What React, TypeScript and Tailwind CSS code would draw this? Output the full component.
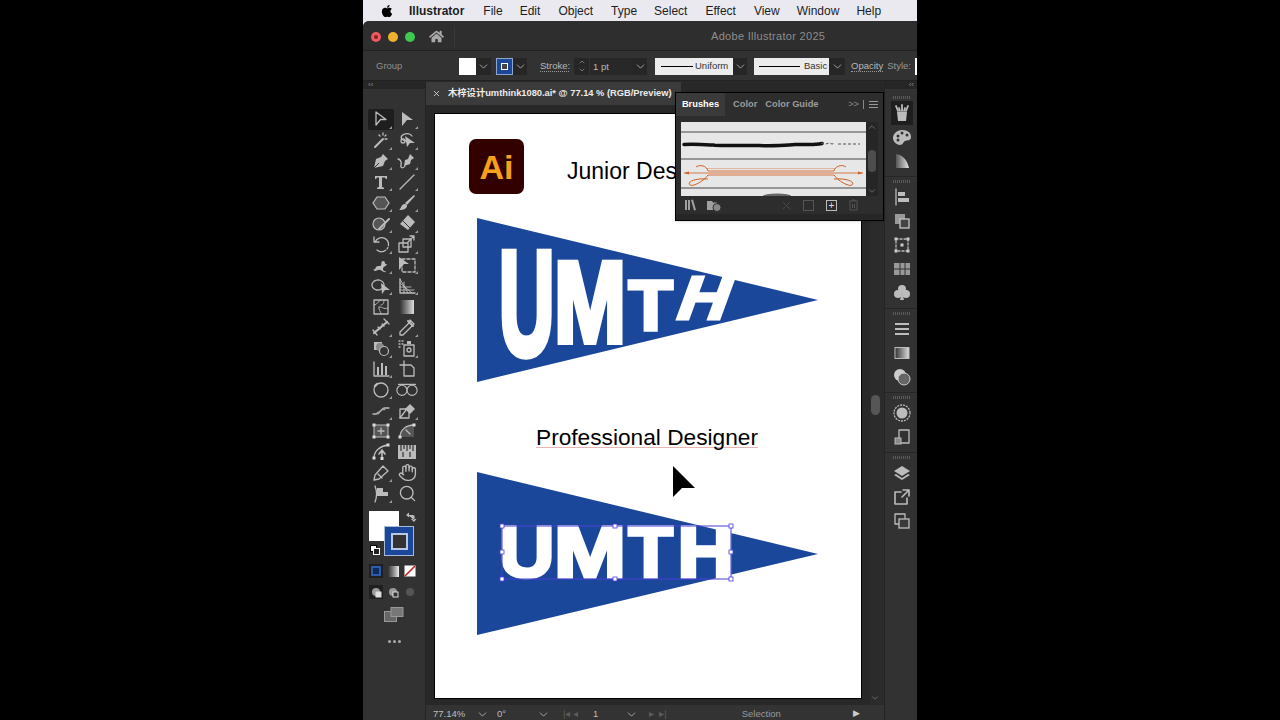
import type { ReactNode } from "react";
import { FaApple, FaHome } from "react-icons/fa";
import { ChevronDown, ChevronUp, Hand, Search, X } from "lucide-react";

const ui = "font-['Liberation_Sans',sans-serif]";

/* ---------- tool icons, all 20x20 ---------- */
const line = { fill: "none", stroke: "currentColor", strokeWidth: 1.3, strokeLinecap: "round", strokeLinejoin: "round" } as const;
const I = ({ children, s = 20 }: { children: ReactNode; s?: number }) => (
  <svg width={s} height={s} viewBox="0 0 20 20" className="text-[#bcbcbc]">{children}</svg>
);

type Tool = { icon: ReactNode; corner?: boolean; active?: boolean };

const tools: Tool[] = [
  { active: true, corner: true, icon: <I><path d="M5 3l10 7.5h-5.5L5 16z" {...line} /></I> },
  { corner: true, icon: <I><path d="M5 3l11 8h-6l-5 6z" fill="currentColor" /></I> },
  { corner: true, icon: <I><path d="M4 17L12 9" {...line} strokeWidth={2} /><path d="M12 3v2M15 5l-1 1M16 9h-2M8 5l1 1" {...line} /></I> },
  { corner: true, icon: <I><path d="M10 11C5 11 3 8 5 5.5 8 3 13 3 15 6" {...line} /><circle cx="6" cy="11" r="2" {...line} /><path d="M8 6l10 7h-5l-3 4z" fill="currentColor" /></I> },
  { corner: true, icon: <I><path d="M12 3l5 5-3 2-2 5-9 2 2-9 5-2z" fill="currentColor" /><path d="M3 17l5-5" stroke="#333" /></I> },
  { corner: true, icon: <I><path d="M13 3l4 4-3 2-1 4-6 2 1-6 3-1z" fill="currentColor" /><path d="M8 15c-2 3-5 2-4-1s-1-6-3-6" {...line} /></I> },
  { corner: true, icon: <I><path d="M4 4h12v3h-1l-1-1.500h-3V15l2 .8V17H6v-1.200l2-.8V5.500H6L5 7H4z" fill="currentColor" /></I> },
  { corner: true, icon: <I><path d="M3 17L17 3" {...line} /></I> },
  { corner: true, icon: <I><path d="M6 4h8l4 6-4 6H6l-4-6z" fill="#555" stroke="currentColor" strokeWidth={1.2} /></I> },
  { corner: true, icon: <I><path d="M17 2l1 1-8 9-2-2z" fill="currentColor" /><path d="M7 11c3 0 4 2 2 4s-5 2-7 2c2-1 2-5 5-6z" fill="currentColor" /></I> },
  { corner: true, icon: <I><circle cx="8" cy="11" r="6" fill="#555" stroke="currentColor" strokeWidth={1.2} /><path d="M8 16l10-10" {...line} strokeWidth={2} /></I> },
  { corner: true, icon: <I><path d="M11 2l7 7-7 8-8-6z" fill="currentColor" /><path d="M6 8l7 7" stroke="#333" /></I> },
  { corner: true, icon: <I><path d="M4 8a7 7 0 1 1 2 8" {...line} strokeDasharray="20 2 1.500 2" /><path d="M3 3v5h5" {...line} /></I> },
  { corner: true, icon: <I><rect x="2" y="9" width="9" height="9" {...line} /><rect x="6" y="5" width="8" height="8" {...line} /><path d="M11 8l6-6M13 2h4v4" {...line} /></I> },
  { corner: true, icon: <I><path d="M2 14c3 2 2-4 6-3s1-5 4-5 1 4 4 3c-1 3-4 2-4 5s4 2 3 3c-3 1-5-3-8-2s-3 2-5-1z" fill="currentColor" /></I> },
  { corner: true, icon: <I><rect x="5" y="4" width="13" height="13" {...line} strokeDasharray="3 2" /><path d="M2 2l10 7H7l-5 6z" fill="currentColor" /></I> },
  { corner: true, icon: <I><ellipse cx="7" cy="9" rx="6" ry="5" {...line} strokeDasharray="3 1" /><path d="M10 7l9 7h-5l-3 4z" fill="currentColor" /></I> },
  { corner: true, icon: <I><path d="M3 3v14h15" {...line} /><path d="M3 7l12 10M3 3l8 14M3 11h11M3 14h14M7 6v11" {...line} strokeWidth={0.9} /></I> },
  { icon: <I><rect x="3" y="3" width="14" height="14" {...line} /><path d="M3 8c4 0 4-5 7-5M8 10c3-1 4 3 9 1M10 17c0-3-3-4-2-7M10 8c3 0 3-4 3-5" {...line} strokeWidth={0.9} /></I> },
  { icon: <svg width="20" height="20" viewBox="0 0 20 20"><defs><linearGradient id="gt" x1="0" x2="1"><stop offset="0" stopColor="#333" /><stop offset="1" stopColor="#ddd" /></linearGradient></defs><rect x="3" y="3" width="14" height="14" fill="url(#gt)" /></svg> },
  { corner: true, icon: <I><path d="M3 16L16 5" {...line} strokeWidth={2.2} /><path d="M2 13l4 5M13 2l5 5M7 10l2 2M11 7l2 2" {...line} /></I> },
  { corner: true, icon: <I><path d="M13 3l4 4-2 2-9 9H3v-3l9-9z" {...line} /><path d="M11 4l5 5" {...line} strokeWidth={2} /></I> },
  { corner: true, icon: <I><rect x="3" y="4" width="8" height="8" fill="currentColor" /><circle cx="9" cy="9" r="4" fill="#888" /><circle cx="13" cy="13" r="4.500" fill="#333" stroke="currentColor" strokeWidth={1.2} /></I> },
  { corner: true, icon: <I><rect x="7" y="7" width="10" height="11" {...line} /><rect x="10" y="3" width="4" height="3" fill="currentColor" /><circle cx="12" cy="12" r="2" {...line} /><path d="M2 3h1M5 3h1M2 6h1M5 6h1M2 9h1" {...line} /></I> },
  { corner: true, icon: <I><path d="M3 3v14h15" {...line} /><path d="M6 16V8h2v8zM10 16V4h2v12zM14 16V7h2v9z" fill="currentColor" /></I> },
  { icon: <I><path d="M3 6h4V2M7 6h7l3 3v8H7z" {...line} /></I> },
  { corner: true, icon: <I><circle cx="10" cy="10" r="7" {...line} /><path d="M4 6l2-2" {...line} strokeWidth={2.4} /></I> },
  { icon: <svg width="22" height="17" viewBox="0 0 26 20" className="text-[#bcbcbc]"><circle cx="7" cy="11" r="6" {...line} /><circle cx="19" cy="11" r="6" {...line} /><path d="M3 4h20" {...line} strokeWidth={1.6} /></svg> },
  { corner: true, icon: <I><path d="M2 13h3c4 0 5-6 9-6h4" {...line} /><circle cx="7" cy="12" r="1" fill="#333" stroke="currentColor" /><circle cx="13" cy="8" r="1" fill="#333" stroke="currentColor" /></I> },
  { corner: true, icon: <I><rect x="3" y="8" width="9" height="9" {...line} /><path d="M13 3l5 5-5 5-5-5z" fill="currentColor" /><path d="M3 17L9 9" {...line} /></I> },
  { icon: <I><rect x="3" y="4" width="14" height="12" fill="#555" stroke="currentColor" /><path d="M10 7v6M7 10h6" {...line} /><rect x="1.500" y="2.500" width="3" height="3" fill="#ddd" /><rect x="15.500" y="2.500" width="3" height="3" fill="#ddd" /><rect x="1.500" y="14.500" width="3" height="3" fill="#ddd" /><rect x="15.500" y="14.500" width="3" height="3" fill="#ddd" /></I> },
  { icon: <I><path d="M3 16C3 9 9 4 17 4v12z" fill="#555" /><path d="M3 16C3 9 9 4 17 4" {...line} /><path d="M9 9l4 4" {...line} /><rect x="1.500" y="14.500" width="3" height="3" fill="#ddd" /><rect x="15.500" y="2.500" width="3" height="3" fill="#ddd" /></I> },
  { icon: <I><path d="M3 16C3 9 9 4 17 3" {...line} /><path d="M11 16V8M8 12l3-4 3 4" {...line} strokeWidth={1.6} /><rect x="1.500" y="14.500" width="3" height="3" fill="#ddd" /><rect x="15.500" y="1.500" width="3" height="3" fill="#ddd" /><rect x="9.500" y="15" width="3" height="3" fill="#ddd" /></I> },
  { icon: <svg width="20" height="20" viewBox="0 0 20 20"><rect x="1" y="3" width="18" height="14" fill="#bbb" /><path d="M4 3v6M7 3v4M10 3v6M13 3v4M16 3v6M6 10v5M13 10v5" stroke="#333" strokeWidth={1.2} /></svg> },
  { corner: true, icon: <I><path d="M3 17l1-5 8-9 5 5-9 8z" {...line} /><path d="M7 11l4 4" {...line} /></I> },
  { icon: <Hand size={19} strokeWidth={1.7} className="text-[#bcbcbc]" /> },
  { corner: true, icon: <I><path d="M4 2c2 5 2 11 0 16" {...line} /><path d="M6 4h6v4h5v4H6z" fill="currentColor" /></I> },
  { icon: <Search size={19} strokeWidth={1.7} className="text-[#bcbcbc]" /> },
];

/* ---------- right dock ---------- */
const dockGroups: ReactNode[][] = [
  [
    <I key="b"><path d="M6 8L4 3M10 8V2M14 8l2-5M8 8l-1-3M12 8l1-3" {...line} strokeWidth={1.8} /><path d="M5 9h10l-1 9H6z" fill="currentColor" /></I>,
    <I key="p"><path d="M10 3c6 0 9 3 9 7s-4 3-6 4-2 4-5 4-7-3-7-7 4-8 9-8z" fill="currentColor" /><circle cx="6" cy="13" r="1.500" fill="#333" /><circle cx="6" cy="9" r="1.500" fill="#333" /><circle cx="10" cy="6" r="1.500" fill="#333" /><circle cx="15" cy="8" r="1.500" fill="#333" /></I>,
    <svg key="g" width="20" height="20" viewBox="0 0 20 20"><defs><linearGradient id="gd" x1="0" x2="1"><stop offset="0" stopColor="#555" /><stop offset="1" stopColor="#e5e5e5" /></linearGradient></defs><path d="M4 3c7 1 11 6 13 14H4z" fill="url(#gd)" /></svg>,
  ],
  [
    <I key="a"><path d="M4 2v16" {...line} /><path d="M6 5h7v4H6zM6 11h11v4H6z" fill="currentColor" /></I>,
    <I key="t"><rect x="3" y="3" width="10" height="10" fill="#999" /><rect x="8" y="8" width="9" height="9" fill="#444" stroke="currentColor" strokeWidth={1.4} /></I>,
    <I key="x"><rect x="4" y="4" width="12" height="12" {...line} strokeDasharray="2 2" /><rect x="2.500" y="2.500" width="3" height="3" fill="#ccc" /><rect x="14.500" y="2.500" width="3" height="3" fill="#ccc" /><rect x="2.500" y="14.500" width="3" height="3" fill="#ccc" /><rect x="14.500" y="14.500" width="3" height="3" fill="#ccc" /><rect x="8.500" y="8.500" width="3" height="3" fill="#ccc" /></I>,
    <I key="k"><rect x="2" y="4" width="16" height="12" fill="#999" /><path d="M2 10h16M8 4v12M13 4v12" stroke="#333" /></I>,
    <I key="c"><circle cx="10" cy="6" r="4" fill="currentColor" /><circle cx="6" cy="11" r="4" fill="currentColor" /><circle cx="14" cy="11" r="4" fill="currentColor" /><path d="M10 10l2 7H8z" fill="currentColor" /></I>,
  ],
  [
    <I key="s"><path d="M3 5h14M3 10h14M3 15h14" stroke="currentColor" strokeWidth={2} /></I>,
    <svg key="gr" width="20" height="20" viewBox="0 0 20 20"><defs><linearGradient id="gs" x1="0" x2="1"><stop offset="0" stopColor="#333" /><stop offset="1" stopColor="#ddd" /></linearGradient></defs><rect x="3" y="4.500" width="14" height="11" fill="url(#gs)" stroke="#bbb" /></svg>,
    <I key="o"><circle cx="8" cy="8" r="6" fill="#ccc" /><circle cx="12" cy="12" r="6" fill="#666" stroke="#ccc" /></I>,
  ],
  [
    <I key="ap"><circle cx="10" cy="10" r="5.500" fill="currentColor" /><circle cx="10" cy="10" r="8" {...line} strokeDasharray="1 2" /></I>,
    <I key="tr"><rect x="7" y="3" width="10" height="13" {...line} /><rect x="3" y="11" width="6" height="6" fill="#888" stroke="currentColor" /></I>,
  ],
  [
    <I key="l"><path d="M10 3l8 5-8 5-8-5z" fill="currentColor" /><path d="M2 12l8 5 8-5-2-1-6 4-6-4z" fill="currentColor" /></I>,
    <I key="e"><path d="M9 5H3v12h12v-6M11 3h6v6M17 3l-7 7" {...line} strokeWidth={1.6} /></I>,
    <I key="ab"><rect x="3" y="3" width="10" height="10" {...line} /><rect x="7" y="8" width="10" height="9" fill="#3a3a3a" stroke="currentColor" strokeWidth={1.3} /></I>,
  ],
];

const Grip = () => <div className="h-[3px] w-[17px] mx-auto bg-[repeating-linear-gradient(90deg,#5a5a5a_0_1px,transparent_1px_2px)]" />;

const Chev = ({ className = "" }: { className?: string }) => (
  <ChevronDown size={13} strokeWidth={1.6} className={`text-[#b5b5b5] ${className}`} />
);

/* ---------- artboard logo text: real glyphs stretched by hand, stroke fattens them ---------- */
const Glyph = ({ ch, x, y, sx, sy, skew = 0 }: { ch: string; x: number; y: number; sx: number; sy: number; skew?: number }) => (
  <text
    transform={`translate(${x} ${y}) skewX(${skew}) scale(${sx} ${sy})`}
    fontFamily="'Liberation Sans', sans-serif"
    fontWeight={700}
    fontSize={100}
    fill="#fff"
    stroke="#fff"
    strokeWidth={5}
    strokeLinejoin="miter"
  >
    {ch}
  </text>
);

const handles = [[502, 526], [615, 526], [731, 526], [502, 552], [731, 552], [502, 579], [615, 579], [731, 579]];

function Artwork() {
  // coordinates are page pixels, the viewBox starts at the artboard's corner
  return (
    <svg width="428" height="586" viewBox="434 113 428 586" className="absolute left-[-1px] top-[-1px]">
      <path d="M477 218L818 300 477 382z" fill="#1b479b" />
      <Glyph ch="U" x={498.9} y={354.5} sx={0.766} sy={1.48} />
      <Glyph ch="M" x={554} y={342} sx={0.865} sy={1.152} />
      <Glyph ch="T" x={628.4} y={330.2} sx={0.726} sy={0.705} />
      <Glyph ch="H" x={672.9} y={318.5} sx={0.7} sy={0.61} skew={-20} />

      <path d="M477 472L818 554 477 635z" fill="#1b479b" />
      <Glyph ch="U" x={498.9} y={577} sx={0.766} sy={0.718} />
      <Glyph ch="M" x={554} y={577.2} sx={0.865} sy={0.718} />
      <Glyph ch="T" x={628.4} y={577.2} sx={0.726} sy={0.718} />
      <Glyph ch="H" x={677.4} y={577.2} sx={0.79} sy={0.718} />
      <rect x="502" y="526" width="229" height="53" fill="none" stroke="#4a3fd6" />
      {handles.map(([x, y]) => (
        <rect key={`${x}-${y}`} x={x - 2} y={y - 2} width="4" height="4" fill="#fff" stroke="#4a3fd6" strokeWidth={0.8} />
      ))}
      <path d="M673 466L695 488 682 488 673 497z" fill="#000" />
    </svg>
  );
}

function BrushesPanel() {
  return (
    <div className="absolute left-[249px] top-[11px] w-[209px] h-[129px] bg-[#2d2d2d] border border-black shadow flex flex-col">
      <div className={`h-[23px] flex items-center text-[9.3px] font-bold text-[#9c9c9c] ${ui}`}>
        <div className="h-full w-[49px] bg-[#3a3a3a] text-white flex items-center justify-center">Brushes</div>
        <span className="ml-[8px]">Color</span>
        <span className="ml-[8px]">Color Guide</span>
        <span className="ml-auto text-[#8a8a8a] font-normal">&gt;&gt;</span>
        <div className="w-px h-[9px] bg-[#888] ml-[4px]" />
        <div className="ml-[5px] mr-[5px] w-[9px] h-[7px] border-y border-[#999] relative">
          <div className="absolute left-0 right-0 top-[2px] h-px bg-[#999]" />
        </div>
      </div>
      <div className="flex ml-[5px] mt-[6px] h-[74px] w-[197px]">
        <svg width="185" height="74" viewBox="0 0 185 74" className="bg-[#e7e7e7]">
          <path d="M0 10h185M0 37h185M0 66h185" stroke="#7c7c7c" strokeWidth={1.5} />
          <path d="M3 22.500c20-1 30 1.500 50 1s35 1 55-.5 20 .5 33-1.500" fill="none" stroke="#111" strokeWidth={3.5} strokeLinecap="round" strokeDasharray="30 .6 44 .6 36 .6 20 .8 9 1" />
          <path d="M140 21.500l3-.5 2 1 3-1 3 1 3-.8M157 22h22" stroke="#555" strokeWidth={1} strokeDasharray="3 2" fill="none" />
          <path d="M3 51h179" stroke="#cf5f22" strokeWidth={0.8} />
          <path d="M3 51l5-1.500v3zM182 51l-5-1.500v3z" fill="#cf5f22" />
          <path d="M25 46.500h130" stroke="#d9a98c" strokeWidth={0.8} />
          <path d="M27 53h126M27 49h126" stroke="#d8672c" strokeWidth={0.9} />
          <path d="M27 53c-4 6-15 12-18 10s2-7 18-6M27 49c-1-5-8-7-12-4M153 53c4 6 15 12 18 10s-2-7-18-6M153 49c1-5 8-7 12-4" fill="none" stroke="#cf5f22" strokeWidth={1} />
          <ellipse cx="96" cy="74" rx="14" ry="2.500" fill="#666" />
        </svg>
        <div className="flex-1 bg-[#262626] flex flex-col items-center relative">
          <ChevronUp size={10} className="text-[#777]" />
          <div className="w-[8px] h-[22px] bg-[#4d4d4d] rounded-full mt-[18px]" />
          <ChevronDown size={10} className="text-[#777] mt-auto" />
        </div>
      </div>
      <div className="h-[18px] relative flex items-center text-[#a0a0a0]">
        <svg width="14" height="12" viewBox="0 0 14 12" className="ml-[8px]"><path d="M1 11V1h2v10zM4 11V1h2v10zM7 1l2-.500 3 10.500-2 .500z" fill="currentColor" /></svg>
        <svg width="16" height="13" viewBox="0 0 16 13" className="ml-[8px]"><path d="M1 2h5l1 1.500h4V11H1z" fill="currentColor" /><circle cx="11" cy="8.500" r="4" fill="#888" stroke="#2d2d2d" /></svg>
        <X size={13} strokeWidth={1.4} className="text-[#4f4f4f] ml-[58px]" />
        <div className="ml-[10px] w-[11px] h-[11px] border border-[#555]" />
        <div className="ml-[12px] w-[11px] h-[11px] border border-[#bbb] text-[#ddd] text-[10px] leading-[9px] text-center">+</div>
        <svg width="11" height="12" viewBox="0 0 11 12" className="ml-[11px]"><path d="M2 3v8h7V3M1 2h9M4 2V1h3v1M4.500 5v4M6.500 5v4" fill="none" stroke="#555" /></svg>
      </div>
      <div className="flex-1 bg-[#262626]" />
    </div>
  );
}

export default function App() {
  return (
    <div className={`w-[1280px] h-[720px] bg-black flex justify-center overflow-hidden ${ui}`}>
      <div className="w-[554px] h-full flex flex-col bg-[#e9e9ef]">
        {/* mac menu bar */}
        <div className="h-[21px] shrink-0 flex items-center text-[#1d1d1f] text-[12px] pl-[17px]">
          <FaApple size={14} className="text-black" />
          <span className="font-bold ml-[15px]">Illustrator</span>
          {[["File", 19], ["Edit", 17], ["Object", 18], ["Type", 18], ["Select", 17], ["Effect", 18], ["View", 18], ["Window", 17], ["Help", 17]].map(([m, g]) => (
            <span key={m} style={{ marginLeft: Number(g) }}>{m}</span>
          ))}
        </div>

        <div className="flex-1 min-h-0 flex flex-col rounded-tl-[6px] overflow-hidden bg-[#323232]">
          {/* title bar */}
          <div className="h-[30px] shrink-0 bg-[#2e2e2e] flex items-center pl-[8px] pt-[2px] border-b border-[#222]">
            <div className="w-[10px] h-[10px] rounded-full bg-[#ee5a5f] flex items-center justify-center"><div className="w-[4px] h-[4px] rounded-full bg-[#8e1c20]" /></div>
            <div className="w-[10px] h-[10px] rounded-full bg-[#f0b22e] ml-[7px]" />
            <div className="w-[10px] h-[10px] rounded-full bg-[#3fc94f] ml-[7px]" />
            <FaHome size={15} className="text-[#a8a8a8] ml-[14px]" />
            <div className="w-px h-[20px] bg-[#3a3a3a] ml-[10px]" />
            <span className="text-[11px] text-[#8d8d8d] ml-[256px] tracking-[0.3px]">Adobe Illustrator 2025</span>
          </div>

          {/* control bar */}
          <div className="h-[30px] shrink-0 bg-[#323232] flex items-center pt-[1px] text-[9.5px] text-[#b8b8b8] border-b border-[#222] whitespace-nowrap">
            <span className="ml-[13px] w-[83px] text-[#8f8f8f]">Group</span>
            <div className="w-[17px] h-[17px] bg-white" />
            <div className="w-[15px] h-[17px] bg-[#262626] flex items-center justify-center"><Chev /></div>
            <div className="ml-[5px] w-[17px] h-[17px] bg-[#1b479b] border border-[#8fa6cc] flex items-center justify-center">
              <div className="w-[7px] h-[7px] border border-white bg-[#444]" />
            </div>
            <div className="w-[14px] h-[17px] bg-[#262626] flex items-center justify-center"><Chev /></div>
            <span className="ml-[13px] w-[29px] border-b border-dotted border-[#999] leading-[11px]">Stroke:</span>
            <div className="ml-[5px] w-[15px] h-[17px] bg-[#262626] flex flex-col items-center justify-center">
              <ChevronUp size={8} strokeWidth={1.6} /><ChevronDown size={8} strokeWidth={1.6} />
            </div>
            <div className="w-[43px] h-[17px] bg-[#282828] ml-px pl-[3px] leading-[17px]">1 pt</div>
            <div className="w-[14px] h-[17px] bg-[#262626] flex items-center justify-center"><Chev /></div>
            <div className="ml-[8px] w-[78px] h-[17px] bg-[#ececec] text-[#333] flex items-center pl-[6px]">
              <div className="w-[32px] h-px bg-black" /><span className="ml-[2px]">Uniform</span>
            </div>
            <div className="w-[14px] h-[17px] bg-[#262626] flex items-center justify-center"><Chev /></div>
            <div className="ml-[7px] w-[75px] h-[17px] bg-[#ececec] text-[#333] flex items-center pl-[5px]">
              <div className="w-[41px] h-px bg-black" /><span className="ml-[4px]">Basic</span>
            </div>
            <div className="w-[16px] h-[17px] bg-[#262626] flex items-center justify-center"><Chev /></div>
            <span className="ml-[6px] border-b border-dotted border-[#999] leading-[11px]">Opacity</span>
            <span className="ml-[4px] text-[#989898]">Style:</span>
            <div className="ml-auto w-[2px] h-[17px] bg-white" />
          </div>

          <div className="flex-1 min-h-0 flex">
            {/* tools */}
            <div className="w-[63px] shrink-0 bg-[#323232] border-r border-[#242424] flex flex-col">
              <div className="h-[8px] bg-[#262626] text-[8px] leading-[8px] text-[#888] pl-[5px]">‹‹</div>
              <div className="grid grid-cols-[26px_26px] auto-rows-[20.8px] ml-[5px] mt-[20px]">
                {tools.map((t, i) => (
                  <div key={i} className={`relative flex items-center justify-center ${t.active ? "bg-[#1e1e1e] rounded-[2px]" : ""}`}>
                    {t.icon}
                    {t.corner && <div className="absolute right-[2px] bottom-[1px] w-0 h-0 border-l-[3px] border-b-[3px] border-l-transparent border-b-[#9a9a9a]" />}
                  </div>
                ))}
              </div>

              <div className="relative h-[46px] mt-[7px] ml-[6px]">
                <div className="absolute left-0 top-0 w-[30px] h-[30px] bg-white" />
                <div className="absolute left-[15px] top-[15px] w-[30px] h-[30px] bg-[#1b479b] border border-[#a9bad8] flex items-center justify-center">
                  <div className="w-[17px] h-[17px] border-2 border-[#b9c8e2] bg-[#333]" />
                </div>
                <svg width="12" height="12" viewBox="0 0 12 12" className="absolute left-[36px] top-0"><path d="M3 4h5c2 0 2 3 1 5M1 4l3-2.500V6.500zM6 8l3 3 2.500-3z" fill="#bbb" /></svg>
                <div className="absolute left-[1px] top-[34px] w-[7px] h-[7px] bg-white border border-black" />
                <div className="absolute left-[4px] top-[37px] w-[7px] h-[7px] bg-[#222] border border-white" />
              </div>

              <div className="flex ml-[6px] mt-[7px] gap-[3px]">
                <div className="w-[14px] h-[14px] bg-[#1f1f1f] flex items-center justify-center"><div className="w-[10px] h-[10px] bg-[#0f2a5c] border-2 border-[#2d5bab]" /></div>
                <div className="w-[14px] h-[14px] flex items-center justify-center"><div className="w-[11px] h-[11px] bg-gradient-to-r from-[#333] to-[#eee]" /></div>
                <svg width="14" height="14" viewBox="0 0 14 14"><rect x="1.500" y="1.500" width="11" height="11" fill="#fff" /><path d="M2 12L12 2" stroke="#c21f1f" strokeWidth={1.6} /></svg>
              </div>

              <div className="flex ml-[6px] mt-[7px] gap-[3px] items-center">
                {[0, 1, 2].map((i) => (
                  <div key={i} className={`w-[14px] h-[14px] flex items-center justify-center ${i === 0 ? "bg-[#1f1f1f]" : ""}`}>
                    <svg width="11" height="11" viewBox="0 0 11 11"><circle cx="5" cy="5" r="4" fill={i === 2 ? "#555" : "#999"} />{i < 2 && <rect x="5" y="5" width="5" height="5" fill={i === 0 ? "#ddd" : "#333"} stroke="#ddd" />}</svg>
                  </div>
                ))}
              </div>

              <svg width="20" height="15" viewBox="0 0 20 15" className="ml-[21px] mt-[8px]"><rect x="0.500" y="4.500" width="12" height="10" fill="#666" stroke="#999" /><rect x="7" y="0.500" width="12" height="9" fill="#777" stroke="#999" /></svg>
              <div className="flex gap-[2px] ml-[25px] mt-[18px]">
                <div className="w-[3px] h-[3px] rounded-full bg-[#aaa]" />
                <div className="w-[3px] h-[3px] rounded-full bg-[#aaa]" />
                <div className="w-[3px] h-[3px] rounded-full bg-[#aaa]" />
              </div>
            </div>

            {/* document */}
            <div className="flex-1 min-w-0 flex flex-col bg-[#282828]">
              <div className="flex-1 min-h-0 flex flex-col relative">
                <div className="h-[23px] mt-px shrink-0 flex items-center">
                  <div className="w-[255px] h-full bg-[#3b3b3b] flex items-center text-[9.3px] font-bold text-[#ececec] whitespace-nowrap font-['Liberation_Sans','Noto_Sans_CJK_SC',sans-serif]">
                    <X size={9} strokeWidth={2} className="ml-[6px]" />
                    <span className="ml-[7px]">木梓设计umthink1080.ai* @ 77.14 % (RGB/Preview)</span>
                  </div>
                </div>
                <div className="flex-1 min-h-0 flex">
                  <div className="flex-1 pl-[8px] pt-[8px]">
                    <div className="relative w-[428px] h-[586px] bg-white border border-black">
                      <Artwork />
                      <div className="absolute left-[34px] top-[25px] w-[55px] h-[55px] rounded-[7px] bg-[#330000] flex items-center justify-center text-[34px] font-bold text-[#f7a11a] leading-none">Ai</div>
                      <span className="absolute left-[132px] top-[43px] text-[23px] leading-[28px] text-black whitespace-nowrap">Junior Designer</span>
                      <span className="absolute left-[101px] top-[314px] text-[22.7px] leading-[19px] text-black whitespace-nowrap border-b border-[#e8b4b4]">Professional Designer</span>
                    </div>
                  </div>
                  <div className="w-[14px] shrink-0 bg-[#2b2b2b] flex flex-col items-center pr-[4px]">
                    <div className="w-[9px] h-[20px] bg-[#565656] rounded-full mt-[290px] shrink-0" />
                    <ChevronDown size={10} className="text-[#777] mt-auto mb-[2px]" />
                  </div>
                </div>
                <BrushesPanel />
              </div>

              {/* status bar */}
              <div className="h-[15px] shrink-0 bg-[#333] flex items-center pt-[3px] text-[9.5px] text-[#bdbdbd] whitespace-nowrap">
                <span className="ml-[7px] w-[42px]">77.14%</span>
                <Chev className="ml-[1px]" />
                <span className="ml-[8px] w-[40px]">0°</span>
                <Chev />
                <span className="ml-[13px] text-[#5c5c5c] w-[27px]">|◂ ◂</span>
                <span className="ml-[3px] w-[32px]">1</span>
                <Chev />
                <span className="ml-[11px] text-[#5c5c5c]">▸ &nbsp;▸|</span>
                <span className="ml-[75px] text-[#9a9a9a]">Selection</span>
                <span className="ml-[72px] text-[#ccc] text-[9px]">▶</span>
              </div>
            </div>

            {/* dock */}
            <div className="w-[33px] shrink-0 bg-[#323232] border-l border-[#242424] flex flex-col">
              <div className="h-[8px] bg-[#262626] text-[8px] leading-[8px] text-[#888] text-right pr-[3px]">‹‹</div>
              {dockGroups.map((g, gi) => (
                <div key={gi} className={`flex flex-col pb-[3px] ${gi === 0 ? "pt-[7px]" : "pt-[3px] border-t border-[#262626]"}`}>
                  <Grip />
                  <div className="flex flex-col mt-[2px]">
                    {g.map((ic, i) => (
                      <div key={i} className={`h-[24px] ml-[6px] mr-[4px] flex items-center justify-center ${gi === 0 && i === 0 ? "bg-[#1e1e1e]" : ""}`}>{ic}</div>
                    ))}
                  </div>
                </div>
              ))}
            </div>
          </div>
        </div>
      </div>
    </div>
  );
}
